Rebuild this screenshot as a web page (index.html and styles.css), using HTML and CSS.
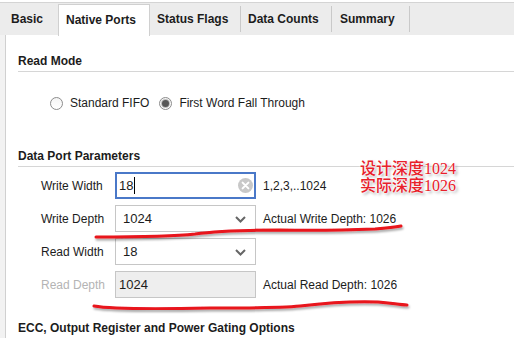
FILE: index.html
```html
<!DOCTYPE html>
<html>
<head>
<meta charset="utf-8">
<link rel="stylesheet" href="styles.css">
</head>
<body>
<div class="page">
  <div class="tabs">
    <div class="tab t-basic">Basic</div>
    <div class="tab t-native active">Native Ports</div>
    <div class="tab t-status sep">Status Flags</div>
    <div class="tab t-data sep">Data Counts</div>
    <div class="tab t-summary sep">Summary</div>
  </div>
  <div class="panel">
    <div class="heading h-read">Read Mode</div>
    <div class="radios">
      <label class="radio"><span class="dot"></span><span class="rlabel">Standard FIFO</span></label>
      <label class="radio checked"><span class="dot"></span><span class="rlabel">First Word Fall Through</span></label>
    </div>
    <div class="heading h-data">Data Port Parameters</div>
    <div class="form">
      <div class="flabel">Write Width</div>
      <div class="box focus"><span class="val">18</span><span class="caret"></span>
        <svg class="clear" width="15" height="15" viewBox="0 0 15 15"><circle cx="7.5" cy="7.5" r="7.5" fill="#c8c8c8"/><path d="M4.6 4.6 L10.4 10.4 M10.4 4.6 L4.6 10.4" stroke="#fff" stroke-width="2" stroke-linecap="round"/></svg>
      </div>
      <div class="hint">1,2,3,..1024</div>

      <div class="flabel">Write Depth</div>
      <div class="box combo"><span class="val">1024</span>
        <svg class="chev" width="11" height="7" viewBox="0 0 11 7"><path d="M1 1 L5.5 5.5 L10 1" fill="none" stroke="#666" stroke-width="2"/></svg>
      </div>
      <div class="hint">Actual Write Depth: 1026</div>

      <div class="flabel">Read Width</div>
      <div class="box combo"><span class="val">18</span>
        <svg class="chev" width="11" height="7" viewBox="0 0 11 7"><path d="M1 1 L5.5 5.5 L10 1" fill="none" stroke="#666" stroke-width="2"/></svg>
      </div>
      <div class="hint"></div>

      <div class="flabel disabled">Read Depth</div>
      <div class="box readonly"><span class="val">1024</span></div>
      <div class="hint">Actual Read Depth: 1026</div>
    </div>
    <div class="heading h-ecc">ECC, Output Register and Power Gating Options</div>
  </div>

  <svg class="marks" width="514" height="338" viewBox="0 0 514 338">
    <defs>
      <filter id="sh" x="-10%" y="-50%" width="120%" height="300%">
        <feDropShadow dx="1" dy="2" stdDeviation="1.2" flood-color="#000" flood-opacity="0.35"/>
      </filter>
    </defs>
    <path filter="url(#sh)" d="M96 237 C130 237 170 237 195 234 C215 231 250 230 280 230 C320 231 350 230 375 229 C388 228 396 227 401 226" fill="none" stroke="#e8121c" stroke-width="3" stroke-linecap="round"/>
    <path filter="url(#sh)" d="M94 306 C110 309 160 309 210 308 C250 308 280 308 300 306 C325 303 350 301 378 302 C392 303 400 305 407 305" fill="none" stroke="#e8121c" stroke-width="3" stroke-linecap="round"/>
  </svg>
  <div class="note">设计深度1024<br>实际深度1026</div>
</div>
</body>
</html>
```
FILE: styles.css
```css
html, body {
  margin: 0;
  padding: 0;
  background: #fff;
}
.page {
  position: relative;
  width: 514px;
  height: 338px;
  overflow: hidden;
  font-family: "Liberation Sans", Arial, sans-serif;
  font-size: 12px;
  color: #1c1c1c;
  padding-top: 2px;
  box-sizing: border-box;
}
.tabs {
  display: flex;
  height: 33px;
  background: #ececec;
  border-top: 1px solid #d4d4d4;
  box-sizing: border-box;
}
.tab {
  box-sizing: border-box;
  font-weight: bold;
  line-height: 32px;
  height: 32px;
  position: relative;
}
.tab.sep::after {
  content: "";
  position: absolute;
  right: 0;
  top: 3px;
  bottom: 3px;
  border-right: 1px solid #c9c9c9;
}
.t-basic { width: 58px; padding-left: 11px; }
.t-native { width: 92px; padding-left: 7px; }
.t-status { width: 91px; padding-left: 7px; }
.t-data { width: 91px; padding-left: 7px; }
.t-summary { width: 78px; padding-left: 8px; }
.tab.active {
  background: #fff;
  margin-top: 1px;
  height: 32px;
  border: 1px solid #d0d0d0;
  border-bottom: none;
  line-height: 30px;
}
.panel {
  margin-left: 0;
  border-left: 5px solid #f2f2f2;
  box-shadow: inset 1px 0 0 #d0d0d0;
  padding-left: 13px;
  height: 303px;
  box-sizing: border-box;
}
.heading {
  font-weight: bold;
  line-height: 16px;
  padding-bottom: 2px;
  border-bottom: 1px solid #d6d6d6;
}
.h-read { padding-top: 18px; }
.h-data { margin-top: 37px; }
.h-ecc { margin-top: 22px; }
.radios {
  display: flex;
  margin-top: 23px;
  margin-left: 32px;
  height: 16px;
  align-items: center;
}
.radio {
  display: flex;
  align-items: center;
}
.radio + .radio { margin-left: 10px; }
.dot {
  width: 11px;
  height: 11px;
  border: 1px solid #8c8c8c;
  border-radius: 50%;
  background: linear-gradient(#f4f4f4, #ffffff);
  margin-right: 7px;
  position: relative;
}
.radio.checked .dot::after {
  content: "";
  position: absolute;
  left: 2px;
  top: 2px;
  width: 7px;
  height: 7px;
  border-radius: 50%;
  background: #585858;
  box-shadow: 0 0 0 1px #bdbdbd;
}
.form {
  display: grid;
  grid-template-columns: 74px 141px auto;
  grid-auto-rows: 27px;
  row-gap: 6px;
  margin-top: 5px;
  margin-left: 23px;
  align-items: center;
}
.flabel { white-space: nowrap; }
.flabel.disabled { color: #b4b4b4; }
.box {
  box-sizing: border-box;
  height: 27px;
  border: 1px solid #c6c6c6;
  background: #fff;
  display: flex;
  align-items: center;
  position: relative;
  padding-left: 7px;
  font-size: 13px;
}
.box.focus {
  border: 2px solid #4a78c8;
  padding-left: 2px;
}
.box.readonly {
  background: #eeeeee;
  padding-left: 3px;
}
.caret {
  display: inline-block;
  width: 1px;
  height: 17px;
  background: #000;
  margin-left: 1px;
}
.clear {
  position: absolute;
  right: 1px;
  top: 4px;
}
.chev {
  position: absolute;
  right: 9px;
  top: 10px;
}
.hint {
  padding-left: 7px;
  white-space: nowrap;
}
.marks {
  position: absolute;
  left: 0;
  top: 0;
  pointer-events: none;
}
.note {
  position: absolute;
  left: 360px;
  top: 160px;
  font-family: "Liberation Serif", "Noto Sans CJK SC", serif;
  font-size: 16px;
  font-weight: 500;
  line-height: 17px;
  color: #e8202a;
  text-shadow: 0 0 1px #fff, 0 0 2px #fff, 0 0 3px #fff, 2px 2px 3px rgba(0,0,0,0.35);
}
```
